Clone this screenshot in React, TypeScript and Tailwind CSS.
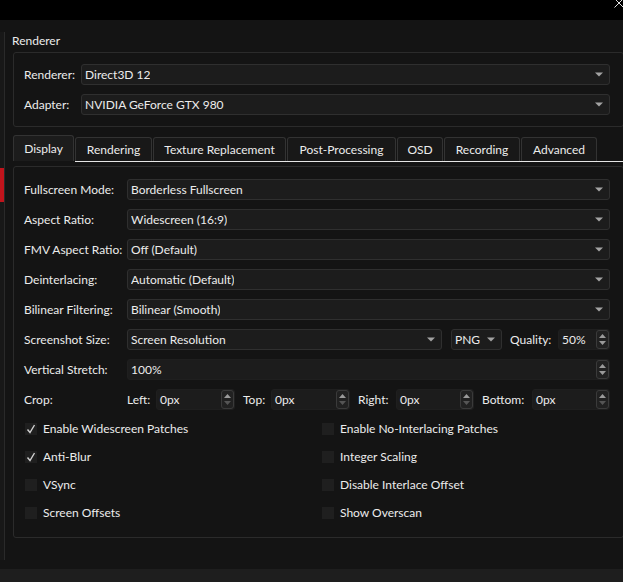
import React from 'react';
import clsx from 'clsx';

function Arrow() {
  return (
    <svg width="8" height="5" viewBox="0 0 8 5" className="shrink-0">
      <path d="M0 0.5h8L4 4.5z" fill="#a3a3a3" />
    </svg>
  );
}

function Combo({ value, className }: { value: string; className?: string }) {
  return (
    <div
      className={clsx(
        'h-[21px] flex items-center justify-between bg-[#1c1c1c] border border-[#2f2f2f] rounded-[3px] pl-[3px] pr-[6px] text-[#ececec]',
        className
      )}
    >
      <span className="truncate">{value}</span>
      <Arrow />
    </div>
  );
}

function Spin({ value, className, atMin }: { value: string; className?: string; atMin?: boolean }) {
  return (
    <div className={clsx('h-[21px] flex bg-[#1c1c1c] rounded-[3px] border border-[#1f1f1f]', className)}>
      <span className="flex-1 pl-[3px] flex items-center text-[#ececec]">{value}</span>
      <div className="w-[13px] border border-[#3a3a3a] rounded-[3px] bg-[#212121] flex flex-col items-center justify-center gap-[3px]">
        <svg width="7" height="4" viewBox="0 0 7 4">
          <path d="M0 4h7L3.5 0z" fill="#9a9a9a" />
        </svg>
        <svg width="7" height="4" viewBox="0 0 7 4">
          <path d="M0 0h7L3.5 4z" fill={atMin ? '#555555' : '#9a9a9a'} />
        </svg>
      </div>
    </div>
  );
}

function Row({ label, children }: { label: string; children: React.ReactNode }) {
  return (
    <div className="flex items-center h-[21px]">
      <span className="w-[103px] shrink-0">{label}</span>
      {children}
    </div>
  );
}

function Check({ label, checked }: { label: string; checked?: boolean }) {
  return (
    <div className="flex items-center h-[20px]">
      <div className="w-[12px] h-[12px] ml-[1px] bg-[#1f1f1f] flex items-center justify-center">
        {checked && (
          <svg width="10" height="10" viewBox="0 0 10 10">
            <path d="M1.5 5.5L4 8.5L8.5 1" stroke="#d0d0d0" strokeWidth="1.4" fill="none" />
          </svg>
        )}
      </div>
      <span className="ml-[6px]">{label}</span>
    </div>
  );
}

const tabs = [
  { name: 'Display', w: 'w-[61px]' },
  { name: 'Rendering', w: 'w-[77px]' },
  { name: 'Texture Replacement', w: 'w-[133px]' },
  { name: 'Post-Processing', w: 'w-[109px]' },
  { name: 'OSD', w: 'w-[46px]' },
  { name: 'Recording', w: 'w-[76px]' },
  { name: 'Advanced', w: 'w-[76px]' },
];

export default function App() {
  return (
    <div className="w-[623px] h-[582px] bg-[#141414] overflow-hidden flex flex-col text-[12px] text-[#ececec] font-['Lato','Liberation_Sans',sans-serif]">
      <div className="h-[20px] shrink-0 bg-black flex justify-end">
        <svg width="10" height="10" viewBox="0 0 10 10" className="-mt-[2px] -mr-[1px]">
          <path d="M0.5 0.5L9.5 9.5M9.5 0.5L0.5 9.5" stroke="#e0e0e0" strokeWidth="1" />
        </svg>
      </div>

      <div className="flex h-[549px] shrink-0">
        <div className="w-[5px] shrink-0 mt-[12px] mb-[9px] bg-[#181818] border-r border-[#2a2a2a]">
          <div className="mt-[136px] h-[34px] w-[4px] bg-[#c0141c]" />
        </div>

        <div className="w-[611px] shrink-0 ml-[8px] pt-[12px] flex flex-col">
          <div className="h-[18px] mb-[2px] flex items-center -ml-[1px]">Renderer</div>

          <div className="border border-[#2b2b2b] rounded-[3px] pt-[11px] pb-[11px] pl-[10px] pr-[13px] flex flex-col gap-[9px]">
            <div className="flex items-center h-[21px]">
              <span className="w-[57px] shrink-0">Renderer:</span>
              <Combo value="Direct3D 12" className="flex-1" />
            </div>
            <div className="flex items-center h-[21px]">
              <span className="w-[57px] shrink-0">Adapter:</span>
              <Combo value="NVIDIA GeForce GTX 980" className="flex-1" />
            </div>
          </div>

          <div className="mt-[8px] flex items-end gap-[1px] h-[26px]">
            {tabs.map((t, i) => (
              <div
                key={t.name}
                className={clsx(
                  'shrink-0 flex items-center justify-center border border-b-0 border-[#333333] rounded-t-[3px]',
                  t.w,
                  i === 0 ? 'h-[26px] bg-[#1c1c1c]' : 'h-[24px] bg-[#181818]'
                )}
              >
                {t.name}
              </div>
            ))}
          </div>
          <div className="flex h-[1px]">
            <div className="w-[62px] shrink-0" />
            <div className="flex-1 bg-[#e6e6e6]" />
          </div>

          <div className="mt-[4px] border border-[#2b2b2b] rounded-[3px] pt-[12px] pb-[14px] pl-[10px] pr-[13px] flex flex-col">
            <div className="flex flex-col gap-[9px]">
              <Row label="Fullscreen Mode:">
                <Combo value="Borderless Fullscreen" className="flex-1" />
              </Row>
              <Row label="Aspect Ratio:">
                <Combo value="Widescreen (16:9)" className="flex-1" />
              </Row>
              <Row label="FMV Aspect Ratio:">
                <Combo value="Off (Default)" className="flex-1" />
              </Row>
              <Row label="Deinterlacing:">
                <Combo value="Automatic (Default)" className="flex-1" />
              </Row>
              <Row label="Bilinear Filtering:">
                <Combo value="Bilinear (Smooth)" className="flex-1" />
              </Row>
              <Row label="Screenshot Size:">
                <Combo value="Screen Resolution" className="flex-1" />
                <Combo value="PNG" className="w-[51px] shrink-0 ml-[9px]" />
                <span className="ml-[8px] w-[48px] shrink-0">Quality:</span>
                <Spin value="50%" className="w-[52px] shrink-0" />
              </Row>
              <Row label="Vertical Stretch:">
                <Spin value="100%" className="flex-1" />
              </Row>
              <Row label="Crop:">
                <span className="w-[29px] shrink-0">Left:</span>
                <Spin value="0px" className="w-[79px] shrink-0" atMin />
                <span className="ml-[8px] w-[28px] shrink-0">Top:</span>
                <Spin value="0px" className="w-[79px] shrink-0" atMin />
                <span className="ml-[8px] w-[38px] shrink-0">Right:</span>
                <Spin value="0px" className="w-[78px] shrink-0" atMin />
                <span className="ml-[8px] w-[50px] shrink-0">Bottom:</span>
                <Spin value="0px" className="w-[78px] shrink-0" atMin />
              </Row>
            </div>

            <div className="mt-[9px] grid grid-cols-[297px_1fr] gap-y-[8px]">
              <Check label="Enable Widescreen Patches" checked />
              <Check label="Enable No-Interlacing Patches" />
              <Check label="Anti-Blur" checked />
              <Check label="Integer Scaling" />
              <Check label="VSync" />
              <Check label="Disable Interlace Offset" />
              <Check label="Screen Offsets" />
              <Check label="Show Overscan" />
            </div>
          </div>
        </div>
      </div>

      <div className="flex-1 bg-[#1e1e1e]" />
    </div>
  );
}
